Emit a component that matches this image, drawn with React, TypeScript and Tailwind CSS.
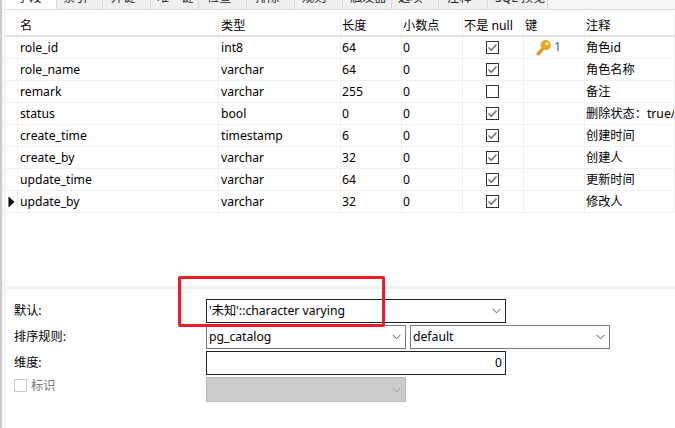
import React from "react";

const cols = ["w-[201px]", "w-[122px]", "w-[61px]", "w-[61px]", "w-[61px]", "w-[61px]", "flex-1"];
const rows = [
  ["role_id", "int8", "64", "0", true, true, "角色id"],
  ["role_name", "varchar", "64", "0", true, false, "角色名称"],
  ["remark", "varchar", "255", "0", false, false, "备注"],
  ["status", "bool", "0", "0", true, false, "删除状态：true/false"],
  ["create_time", "timestamp", "6", "0", true, false, "创建时间"],
  ["create_by", "varchar", "32", "0", true, false, "创建人"],
  ["update_time", "varchar", "64", "0", true, false, "更新时间"],
  ["update_by", "varchar", "32", "0", true, false, "修改人"],
] as const;
const tabs = [
  ["字段", "w-[51px] pl-[11px] bg-white"],
  ["索引", "w-[46px] pl-[6px] bg-[#f0f0f0]"],
  ["外键", "w-[48px] pl-[8px] bg-[#f0f0f0]"],
  ["唯一键", "w-[48px] pl-[6px] bg-[#f0f0f0]"],
  ["检查", "w-[48px] pl-[8px] bg-[#f0f0f0]"],
  ["排除", "w-[48px] pl-[8px] bg-[#f0f0f0]"],
  ["规则", "w-[48px] pl-[7px] bg-[#f0f0f0]"],
  ["触发器", "w-[49px] pl-[7px] bg-[#f0f0f0]"],
  ["选项", "w-[47px] pl-[6px] bg-[#f0f0f0]"],
  ["注释", "w-[49px] pl-[8px] bg-[#f0f0f0]"],
  ["SQL 预览", "w-[60px] pl-[7px] bg-[#f0f0f0]"],
] as const;

function Check({ on }: { on: boolean }) {
  return (
    <span className="flex h-[13px] w-[13px] items-center justify-center border border-[#333333] bg-white">
      {on && (
        <svg width="11" height="11" viewBox="0 0 11 11" fill="none">
          <path d="M1.5 5.5 L4.2 8.2 L9.5 2.5" stroke="#666666" strokeWidth="1.3" />
        </svg>
      )}
    </span>
  );
}

function Key() {
  return (
    <svg width="15" height="16" viewBox="0 0 15 16" className="mr-[3px] shrink-0">
      <path d="M0.5 13 L6 7.2 L8.5 9.4 L6.2 11.8 L6.2 13.2 L4.4 13.2 L4.4 15 L2.8 15.6 L1.6 15.6 L0.5 14.5 Z" fill="#dc9a22" />
      <circle cx="9.7" cy="5.2" r="5.1" fill="#e5a526" />
      <circle cx="11" cy="3.8" r="1.5" fill="#fdf3d8" />
    </svg>
  );
}

function Chevron({ color = "#555555" }: { color?: string }) {
  return (
    <svg width="9" height="6" viewBox="0 0 9 6" fill="none">
      <path d="M0.5 0.8 L4.5 4.8 L8.5 0.8" stroke={color} strokeWidth="1" />
    </svg>
  );
}

function Cell({ w, children, extra = "pl-[2px]" }: { w: string; children?: React.ReactNode; extra?: string }) {
  return (
    <div className={`${w} flex h-full shrink-0 items-center overflow-hidden whitespace-nowrap border-r border-[#f0f0f0] ${extra}`}>
      {children}
    </div>
  );
}

export default function App() {
  return (
    <div className="relative flex h-[428px] w-[675px] overflow-hidden bg-white text-[12.2px] text-black [font-family:'Noto_Sans','Noto_Sans_CJK_SC',sans-serif]">
      <div className="h-full w-[2px] shrink-0 bg-[#cccccc]" />
      <div className="h-full w-[4px] shrink-0 bg-[#f5f5f5]" />
      <div className="flex min-w-0 flex-1 flex-col">
        <div className="flex h-[10px] shrink-0 items-start overflow-hidden border-b border-[#dadada] bg-[#f5f5f5]">
          {tabs.map(([t, w]) => (
            <div key={t} className={`${w} flex h-[9px] shrink-0 items-end whitespace-nowrap border-r border-[#d9d9d9] pb-[2px] leading-[18px] text-[#222222]`}>
              {t}
            </div>
          ))}
        </div>
        <div className="h-[5px] shrink-0" />
        <div className="flex h-[22px] shrink-0 border-b-2 border-[#e3e3e3]">
          <Cell w="w-[12px]" />
          {["名", "类型", "长度", "小数点", "不是 null", "键", "注释"].map((h, i) => (
            <Cell key={h} w={cols[i]} extra={i < 2 ? "pl-[2px] pt-[2px]" : "pl-[1px] pt-[2px]"}>{h}</Cell>
          ))}
        </div>
        {rows.map((r, i) => (
          <div key={r[0]} className="flex h-[22px] shrink-0 border-b border-[#f0f0f0]">
            <Cell w="w-[12px]">
              {i === 7 && (
                <svg width="7" height="12" viewBox="0 0 7 12">
                  <path d="M0.5 0.5 L6.5 6 L0.5 11.5 Z" fill="#000000" />
                </svg>
              )}
            </Cell>
            <Cell w={cols[0]} extra="pl-[2px] pt-[1px]">{r[0]}</Cell>
            <Cell w={cols[1]} extra="pl-[2px] pt-[1px]">{r[1]}</Cell>
            <Cell w={cols[2]} extra="pl-[1px] pt-[1px]">{r[2]}</Cell>
            <Cell w={cols[3]} extra="pl-[1px] pt-[1px]">{r[3]}</Cell>
            <Cell w={cols[4]} extra="justify-center pr-[1px]"><Check on={r[4]} /></Cell>
            <Cell w={cols[5]} extra="pl-[12px]">
              {r[5] && (<><Key /><span className="text-[#1f6fb5]">1</span></>)}
            </Cell>
            <Cell w={cols[6]} extra="pl-[1px] pt-[1px]">{r[6]}</Cell>
          </div>
        ))}
        <div className="flex-1" />
        <div className="flex h-[142px] shrink-0 flex-col gap-[2px] border-t-[3px] border-[#f0f0f0] pl-[8px] pt-[10px]">
          <div className="flex h-[24px] items-center">
            <span className="w-[192px] shrink-0">默认:</span>
            <div className="flex h-full w-[300px] items-center justify-between border border-[#222222] pl-[2px] pr-[4px]">
              <span>'未知'::character varying</span>
              <Chevron />
            </div>
          </div>
          <div className="flex h-[24px] items-center">
            <span className="w-[192px] shrink-0">排序规则:</span>
            <div className="flex h-full w-[200px] items-center justify-between border border-[#7a7a7a] pl-[2px] pr-[4px]">
              <span>pg_catalog</span>
              <Chevron />
            </div>
            <div className="ml-[4px] flex h-full w-[200px] items-center justify-between border border-[#7a7a7a] pl-[2px] pr-[4px]">
              <span>default</span>
              <Chevron />
            </div>
          </div>
          <div className="flex h-[24px] items-center">
            <span className="w-[192px] shrink-0">维度:</span>
            <div className="flex h-full w-[300px] items-center justify-end border border-[#222222] pr-[3px]">0</div>
          </div>
          <div className="flex h-[25px] items-start">
            <div className="flex w-[192px] shrink-0 items-center gap-[4px] pt-[2px] text-[#777777]">
              <span className="h-[13px] w-[13px] border border-[#cccccc]" />
              <span className="leading-[13px]">标识</span>
            </div>
            <div className="flex h-full w-[200px] items-center justify-end border border-[#bcbcbc] bg-[#cccccc] pr-[4px]">
              <Chevron color="#a0a0a0" />
            </div>
          </div>
        </div>
      </div>
      <div className="pointer-events-none absolute left-[178px] top-[276px] h-[51px] w-[207px] rounded-[2px] border-[3px] border-[#ee1c25]" />
    </div>
  );
}
